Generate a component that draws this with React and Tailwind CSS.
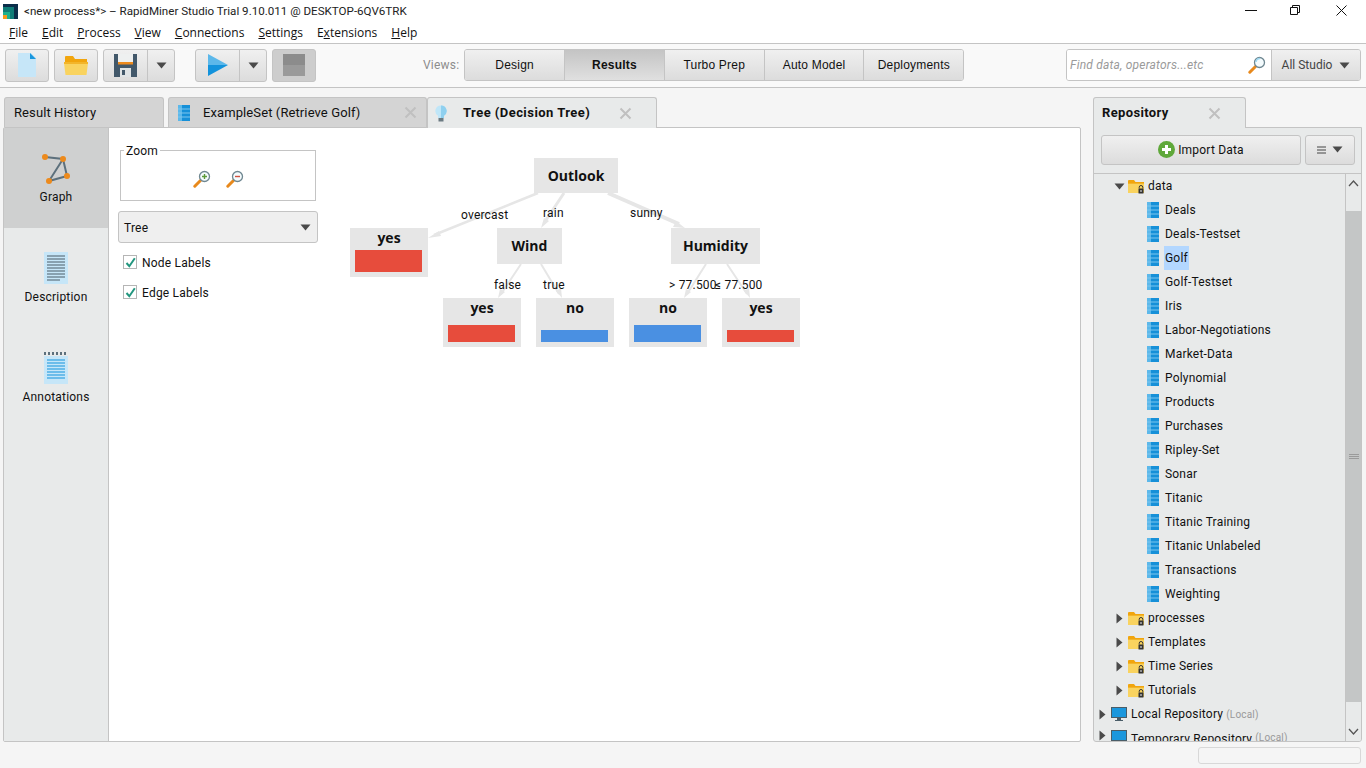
import React from "react";

const Caret = ({ className = "" }) => (
  <svg width="11" height="7" viewBox="0 0 11 7" className={className}><path d="M0.5 0.5h10L5.5 6.5z" fill="#4a4a4a" /></svg>
);

const DataIcon = () => (
  <svg width="12" height="16" viewBox="0 0 12 16" className="shrink-0">
    <rect width="12" height="16" fill="#1690d8" />
    <rect width="4" height="16" fill="#5cb8ea" />
    <path d="M0 4h12M0 8h12M0 12h12" stroke="#7cc6ee" strokeWidth="1" />
  </svg>
);

const Folder = ({ lock = true }) => (
  <svg width="17" height="15" viewBox="0 0 17 15" className="shrink-0">
    <path d="M0 2a1 1 0 0 1 1-1h5l1.5 2H16v3H0z" fill="#f1a50d" />
    <path d="M0 5h16v9H0z" fill="#f9d35f" />
    <path d="M0 4h16v1H0z" fill="#f3b52a" />
    {lock && (
      <g>
        <path d="M11.2 9.5V8.3a1.8 1.8 0 0 1 3.6 0v1.2" fill="none" stroke="#333" strokeWidth="1" />
        <rect x="10.5" y="9.5" width="5" height="5" rx="0.5" fill="#333" />
        <rect x="12.5" y="11" width="1" height="2" fill="#eee" />
      </g>
    )}
  </svg>
);

const Monitor = () => (
  <svg width="16" height="14" viewBox="0 0 16 14" className="shrink-0">
    <rect x="0" y="0" width="16" height="11" fill="#1b97dd" />
    <path d="M0 0h16v1H1v10H0z" fill="#4a5d68" />
    <path d="M16 0v11H0v-1h15V0z" fill="#4a5d68" />
    <path d="M6 11h4v2h2v1H4v-1h2z" fill="#4a5d68" />
  </svg>
);

const Close = ({ className = "" }) => (
  <svg width="13" height="13" viewBox="0 0 13 13" className={className}>
    <path d="M1.5 1.5l10 10M11.5 1.5l-10 10" stroke="#c0c0c0" strokeWidth="2" />
  </svg>
);

const Bulb = () => (
  <svg width="12" height="17" viewBox="0 0 12 17">
    <path d="M6 0.5a5.5 5.5 0 0 1 3 10.2V13H3v-2.3A5.5 5.5 0 0 1 6 0.5z" fill="#bfe6f8" />
    <path d="M6 0.5a5.5 5.5 0 0 1 3 10.2V13H6z" fill="#8fd0ef" />
    <rect x="3.5" y="13" width="5" height="3.5" fill="#6b7a82" />
  </svg>
);

const Magnifier = ({ sign, size = 18 }) => (
  <svg width={size} height={size} viewBox="0 0 18 18">
    <path d="M7.5 10.5L1.8 16.2" stroke="#e8891c" strokeWidth="3" strokeLinecap="round" />
    <circle cx="11.5" cy="6.5" r="5" fill="#f4fbfd" stroke="#6f8791" strokeWidth="1.3" />
    {sign === "plus" && <path d="M9 6.5h5M11.5 4v5" stroke="#5c9a3a" strokeWidth="1.4" />}
    {sign === "minus" && <path d="M9 6.5h5" stroke="#d1503f" strokeWidth="1.4" />}
    {sign === "none" && <path d="M8 6a4 4 0 0 1 4-3.5" stroke="#9fd8f0" strokeWidth="1.5" fill="none" />}
  </svg>
);

const Check = () => (
  <span className="w-[14px] h-[14px] border border-[#b5b5b5] bg-white flex items-center justify-center shrink-0">
    <svg width="11" height="11" viewBox="0 0 11 11"><path d="M1.5 6l2.8 3.2L9.8 1.2" fill="none" stroke="#23967f" strokeWidth="2" /></svg>
  </span>
);

const ToolBtn = ({ children, className = "" }) => (
  <div className={`h-[33px] flex items-center justify-center border border-[#c4c4c4] rounded-[3px] bg-gradient-to-b from-[#f0f0f0] to-[#dcdcdc] ${className}`}>{children}</div>
);

const menu = [
  ["F", "ile"], ["E", "dit"], ["P", "rocess"], ["V", "iew"], ["C", "onnections"], ["S", "ettings"], ["Ex", "tensions"], ["H", "elp"],
];

const views = [
  ["Design", false], ["Results", true], ["Turbo Prep", false], ["Auto Model", false], ["Deployments", false],
];

const files = ["Deals", "Deals-Testset", "Golf", "Golf-Testset", "Iris", "Labor-Negotiations", "Market-Data", "Polynomial", "Products", "Purchases", "Ripley-Set", "Sonar", "Titanic", "Titanic Training", "Titanic Unlabeled", "Transactions", "Weighting"];
const folders = ["processes", "Templates", "Time Series", "Tutorials"];

const RightCaret = () => (
  <svg width="7" height="11" viewBox="0 0 7 11" className="shrink-0"><path d="M0.5 0.5v10l6-5z" fill="#4a4a4a" /></svg>
);

const TreeNode = ({ x, y, w, h, label, bar, barTop }) => (
  <div className="absolute bg-[#e6e6e6]" style={{ left: x, top: y, width: w, height: h }}>
    {bar ? (
      <>
        <div className="text-center font-bold text-[14px] leading-[19px] text-[#111]" style={{ fontFamily: '"Open Sans", sans-serif' }}>{label}</div>
        <div className="absolute left-[5px] right-[6px] bottom-[5px]" style={{ height: barTop, background: bar }} />
      </>
    ) : (
      <div className="h-full flex items-center justify-center font-bold text-[14px] text-[#111] pb-[1px]" style={{ fontFamily: '"Open Sans", sans-serif' }}>{label}</div>
    )}
  </div>
);

const EdgeLabel = ({ x, y, children }) => (
  <span className="absolute text-[12px] leading-[14px] text-[#111] whitespace-nowrap tracking-[0.2px]" style={{ left: x, top: y }}>{children}</span>
);

const Graph = () => (
  <div className="relative flex-1">
    <svg className="absolute left-0 top-0" width="500" height="230" viewBox="0 0 500 230">
      <g fill="#e6e6e6">
        <path d="M98 110l11-7 2 5z" />
        <path d="M211 100l3-10 5 3z" />
        <path d="M355 100l-12-1 3-6z" />
        <path d="M168 170l2-9 5 3z" />
        <path d="M232 170l-6-7 5-3z" />
        <path d="M354 170l2-9 5 3z" />
        <path d="M420 170l-6-7 5-3z" />
      </g>
      <g fill="none" stroke="#e6e6e6">
        <path d="M208 65L104 107" strokeWidth="2.5" />
        <path d="M234 65L214 95" strokeWidth="3" />
        <path d="M278 65L349 96" strokeWidth="4" />
        <path d="M191 136L171 166" strokeWidth="2" />
        <path d="M211 136L229 166" strokeWidth="2" />
        <path d="M376 136L357 166" strokeWidth="2" />
        <path d="M397 136L417 166" strokeWidth="2" />
      </g>
    </svg>
    <TreeNode x={204} y={30} w={84} h={35} label="Outlook" />
    <TreeNode x={20} y={100} w={78} h={49} label="yes" bar="#e74c3c" barTop={22} />
    <TreeNode x={167} y={100} w={65} h={36} label="Wind" />
    <TreeNode x={341} y={100} w={89} h={36} label="Humidity" />
    <TreeNode x={113} y={170} w={78} h={49} label="yes" bar="#e74c3c" barTop={17} />
    <TreeNode x={206} y={170} w={78} h={49} label="no" bar="#4a90e2" barTop={12} />
    <TreeNode x={299} y={170} w={78} h={49} label="no" bar="#4a90e2" barTop={17} />
    <TreeNode x={392} y={170} w={78} h={49} label="yes" bar="#e74c3c" barTop={12} />
    <EdgeLabel x={131} y={80}>overcast</EdgeLabel>
    <EdgeLabel x={213} y={78}>rain</EdgeLabel>
    <EdgeLabel x={300} y={78}>sunny</EdgeLabel>
    <EdgeLabel x={164} y={150}>false</EdgeLabel>
    <EdgeLabel x={213} y={150}>true</EdgeLabel>
    <EdgeLabel x={339} y={150}>&gt; 77.500</EdgeLabel>
    <EdgeLabel x={385} y={150}>≤ 77.500</EdgeLabel>
  </div>
);

const SideItem = ({ active, label, children }) => (
  <div className={`h-[100px] flex flex-col items-center pt-[24px] ${active ? "bg-[#cfd0d0]" : ""}`}>
    <div className="h-[32px] flex items-center justify-center">{children}</div>
    <span className="text-[12px] leading-[14px] mt-[6px] text-[#111] tracking-[0.2px]">{label}</span>
  </div>
);

export default function App() {
  return (
    <div className="w-[1366px] h-[768px] overflow-hidden flex flex-col bg-[#f5f5f5] text-[12px] text-[#111]" style={{ fontFamily: 'Roboto, sans-serif' }}>
      {/* Title bar */}
      <div className="h-[21px] bg-white flex items-center shrink-0 relative">
        <svg width="15" height="15" viewBox="0 0 15 15" className="ml-[3px] mt-[1px]">
          <rect width="15" height="15" fill="#0b2e4a" />
          <rect y="3" width="11" height="12" fill="#0f7d78" />
          <rect y="8" width="7" height="7" fill="#1db08e" />
          <rect y="11" width="4" height="4" fill="#f59a1c" />
        </svg>
        <span className="ml-[6px] text-[11.6px] text-[#222] mt-[2px]">&lt;new process*&gt; – RapidMiner Studio Trial 9.10.011 @ DESKTOP-6QV6TRK</span>
        <div className="ml-auto flex items-center mr-[18px] mb-[1px]">
          <svg width="12" height="12" viewBox="0 0 12 12"><path d="M0 6.5h12" stroke="#111" /></svg>
          <svg width="12" height="12" viewBox="0 0 12 12" className="ml-[32px]"><path d="M1.5 3.5h7v7h-7zM3.5 3.5v-2h7v7h-2" fill="none" stroke="#111" /></svg>
          <svg width="13" height="13" viewBox="0 0 13 13" className="ml-[34px]"><path d="M1.5 1.5l10 10M11.5 1.5l-10 10" stroke="#111" /></svg>
        </div>
      </div>
      {/* Menu */}
      <div className="h-[23px] bg-white border-b border-[#c4c4c4] flex items-center pl-[9px] gap-[14px] pt-[2px] shrink-0 text-[12px]" style={{ fontFamily: '"Open Sans", sans-serif' }}>
        {menu.map(([u, r]) => (
          <span key={u} className="text-[#111]">
            {u === "Ex" ? <>E<span className="underline">x</span></> : <span className="underline">{u}</span>}{r}
          </span>
        ))}
      </div>
      {/* Toolbar */}
      <div className="h-[44px] bg-[#f9f9f9] border-b border-[#c4c4c4] flex items-center pl-[5px] pr-[5px] pb-[1px] shrink-0">
        <ToolBtn className="w-[44px]">
          <svg width="18" height="24" viewBox="0 0 18 24"><path d="M0 0h13l5 5v19H0z" fill="#c6e6f8" /><path d="M12 0l6 6h-6z" fill="#1b97dd" /></svg>
        </ToolBtn>
        <ToolBtn className="w-[44px] ml-[5px]">
          <svg width="24" height="20" viewBox="0 0 24 20"><path d="M1 2a1 1 0 0 1 1-1h7l2 3h12v4H1z" fill="#f1a50d" /><path d="M0 8h24l-1.5 12h-21z" fill="#f9d35f" /><path d="M0 7h24v2H0z" fill="#f3b52a" /></svg>
        </ToolBtn>
        <div className="ml-[5px] flex h-[33px] border border-[#c4c4c4] rounded-[3px] bg-gradient-to-b from-[#f0f0f0] to-[#dcdcdc]">
          <div className="w-[44px] flex items-center justify-center border-r border-[#c4c4c4]">
            <svg width="23" height="23" viewBox="0 0 23 23"><path d="M0 0h23v23H0z" fill="#42586a" /><rect x="4" y="0" width="15" height="9" fill="#eef0f0" /><rect x="4" y="8" width="15" height="2.5" fill="#ed8a1c" /><rect x="6" y="14" width="11" height="9" fill="#dfe3e5" /><rect x="8" y="16" width="3" height="5" fill="#42586a" /></svg>
          </div>
          <div className="w-[26px] flex items-center justify-center"><Caret /></div>
        </div>
        <div className="ml-[20px] flex h-[33px] border border-[#c4c4c4] rounded-[3px] bg-gradient-to-b from-[#f0f0f0] to-[#dcdcdc]">
          <div className="w-[44px] flex items-center justify-center border-r border-[#c4c4c4]">
            <svg width="20" height="22" viewBox="0 0 20 22"><path d="M0 0l20 11H0z" fill="#5cb8ea" /><path d="M0 11h20L0 22z" fill="#1393dc" /></svg>
          </div>
          <div className="w-[26px] flex items-center justify-center"><Caret /></div>
        </div>
        <div className="ml-[5px] w-[44px] h-[33px] rounded-[3px] bg-[#cdcdcd] border border-[#c4c4c4] flex items-center justify-center">
          <div className="w-[22px] h-[22px] bg-gradient-to-b from-[#8c8c8c] from-50% to-[#9a9a9a] to-50%" />
        </div>
        <span className="ml-[107px] text-[#8d8d8d] text-[12px] tracking-[0.2px]">Views:</span>
        <div className="ml-[5px] flex h-[32px] w-[500px] border border-[#c4c4c4] rounded-[3px] overflow-hidden tracking-[0.2px]" style={{ fontFamily: '"Liberation Sans", sans-serif' }}>
          {views.map(([v, a], i) => (
            <div key={v} className={`flex-1 flex items-center justify-center text-[12px] ${i ? "border-l border-[#c4c4c4]" : ""} ${a ? "font-bold bg-gradient-to-b from-[#c4c4c4] to-[#e0e0e0]" : "bg-gradient-to-b from-[#f0f0f0] to-[#dcdcdc]"}`}>{v}</div>
          ))}
        </div>
        <div className="ml-auto flex h-[32px] w-[295px] border border-[#c4c4c4] rounded-[3px] overflow-hidden">
          <div className="flex-1 bg-white flex items-center justify-between pl-[3px] pr-[5px] border-r border-[#c4c4c4]">
            <span className="italic text-[#9a9a9a] text-[12px] tracking-[0.2px]">Find data, operators...etc</span>
            <Magnifier sign="none" />
          </div>
          <div className="w-[88px] flex items-center justify-center gap-[7px] bg-gradient-to-b from-[#f0f0f0] to-[#dcdcdc] text-[#444]">All Studio <Caret /></div>
        </div>
      </div>
      {/* Main */}
      <div className="flex-1 flex pl-[3px] pr-[4px] pt-[9px] min-h-0 gap-[12px]">
        <div className="w-[1078px] flex flex-col">
          <div className="h-[30px] flex items-stretch pl-[1px] shrink-0 text-[13px] tracking-[0.1px]">
            <div className="w-[160px] bg-[#d4d4d4] border border-b-0 border-[#c4c4c4] rounded-t-[3px] flex items-center pl-[9px]">Result History</div>
            <div className="w-[259px] ml-[4px] bg-[#d4d4d4] border border-b-0 border-[#c4c4c4] rounded-t-[3px] flex items-center pl-[9px]">
              <DataIcon /><span className="ml-[13px]">ExampleSet (Retrieve Golf)</span>
              <Close className="ml-auto mr-[9px]" />
            </div>
            <div className="w-[230px] -mb-px z-10 bg-[#e8eaea] border border-b-0 border-[#c4c4c4] rounded-t-[3px] flex items-center pl-[7px]">
              <Bulb /><span className="ml-[16px] font-bold tracking-[0.45px]">Tree (Decision Tree)</span>
              <Close className="ml-[29px]" />
            </div>
          </div>
          <div className="h-[616px] bg-white border border-[#c4c4c4] rounded-[2px] flex">
            <div className="w-[105px] bg-[#e8eaea] border-r border-[#c4c4c4] shrink-0">
              <SideItem active label="Graph">
                <svg width="30" height="32" viewBox="0 0 30 32">
                  <path d="M4 5L22 7L26 24L8 29L22 7" fill="none" stroke="#5d707c" strokeWidth="2" />
                  <circle cx="4" cy="5" r="3" fill="#ed8a1c" /><circle cx="22" cy="7" r="3" fill="#ed8a1c" />
                  <circle cx="26" cy="24" r="3" fill="#ed8a1c" /><circle cx="8" cy="29" r="3" fill="#ed8a1c" />
                </svg>
              </SideItem>
              <SideItem label="Description">
                <svg width="24" height="32" viewBox="0 0 24 32"><rect width="24" height="32" fill="#c6e6f8" /><path d="M3 4h18M3 7h18M3 10h18M3 13h18M3 16h18M3 19h18M3 22h18M3 25h18M3 28h13" stroke="#4a5d68" strokeWidth="1" /></svg>
              </SideItem>
              <SideItem label="Annotations">
                <svg width="24" height="32" viewBox="0 0 24 32"><rect y="4" width="24" height="28" fill="#c6e6f8" /><path d="M1 0v3M5 0v3M9 0v3M13 0v3M17 0v3M21 0v3" stroke="#5d707c" strokeWidth="2" /><path d="M3 8h18M3 11h18M3 14h18M3 17h18M3 20h18M3 23h18M3 26h18" stroke="#1393dc" strokeWidth="1" /></svg>
              </SideItem>
            </div>
            <div className="w-[221px] shrink-0 pl-[9px] pt-[22px] flex flex-col tracking-[0.2px]">
              <div className="relative ml-[2px] w-[196px] h-[51px] border border-[#c4c4c4] flex items-center justify-center gap-[15px] pt-[6px]">
                <span className="absolute left-[3px] -top-[7px] bg-white px-[2px] leading-[15px] text-[12px]">Zoom</span>
                <Magnifier sign="plus" />
                <Magnifier sign="minus" />
              </div>
              <div className="mt-[10px] w-[200px] h-[32px] border border-[#c4c4c4] rounded-[3px] bg-[#efefef] flex items-center justify-between pl-[5px] pr-[6px]">
                <span className="pt-[2px]">Tree</span><Caret />
              </div>
              <div className="mt-[12px] ml-[5px] flex items-center gap-[5px] h-[14px]"><Check /><span className="pt-[2px]">Node Labels</span></div>
              <div className="mt-[16px] ml-[5px] flex items-center gap-[5px] h-[14px]"><Check /><span className="pt-[2px]">Edge Labels</span></div>
            </div>
            <Graph />
          </div>
        </div>
        <div className="flex-1 flex flex-col min-w-0">
          <div className="h-[30px] shrink-0 flex">
            <div className="w-[153px] -mb-px z-10 bg-[#e8eaea] border border-b-0 border-[#c4c4c4] rounded-t-[3px] flex items-center pl-[8px] font-bold text-[13px] tracking-[0.35px]">
              Repository<Close className="ml-[39px]" />
            </div>
          </div>
          <div className="h-[616px] border border-[#c4c4c4] rounded-b-[3px] bg-[#e8eaea] flex flex-col overflow-hidden tracking-[0.2px]">
            <div className="h-[46px] flex items-center pl-[7px] pr-[6px] pb-[2px] gap-[4px] border-b border-[#c4c4c4] shrink-0">
              <div className="w-[200px] h-[30px] border border-[#c4c4c4] rounded-[3px] bg-gradient-to-b from-[#f0f0f0] to-[#dcdcdc] flex items-center justify-center gap-[3px]">
                <svg width="17" height="17" viewBox="0 0 17 17"><circle cx="8.5" cy="8.5" r="8.5" fill="#5fa83a" /><path d="M8.5 4v9M4 8.5h9" stroke="#fff" strokeWidth="3" /></svg>
                Import Data
              </div>
              <div className="w-[50px] h-[30px] border border-[#c4c4c4] rounded-[3px] bg-gradient-to-b from-[#f0f0f0] to-[#dcdcdc] flex items-center justify-center gap-[6px]">
                <svg width="9" height="8" viewBox="0 0 9 8"><path d="M0 1h9M0 4h9M0 7h9" stroke="#444" /></svg>
                <Caret />
              </div>
            </div>
            <div className="flex-1 flex min-h-0">
              <div className="flex-1 overflow-hidden min-w-0">
                <div className="h-6 flex items-center pl-[20px]"><Caret /><span className="ml-[3px]"><Folder /></span><span className="ml-[3px]">data</span></div>
                {files.map((f) => (
                  <div key={f} className="h-6 flex items-center pl-[53px]">
                    <DataIcon />
                    <span className={`ml-[5px] h-6 flex items-center px-[1px] ${f === "Golf" ? "bg-[#b3d7ff]" : ""}`}>{f}</span>
                  </div>
                ))}
                {folders.map((f) => (
                  <div key={f} className="h-6 flex items-center pl-[22px]"><RightCaret /><span className="ml-[5px]"><Folder /></span><span className="ml-[3px]">{f}</span></div>
                ))}
                <div className="h-6 flex items-center pl-[5px]"><RightCaret /><span className="ml-[5px]"><Monitor /></span><span className="ml-[4px]">Local Repository</span><span className="ml-[3px] text-[10px] text-[#999]">(Local)</span></div>
                <div className="h-[21px] overflow-hidden flex items-start pl-[5px] pt-[4px]"><RightCaret /><span className="ml-[5px]"><Monitor /></span><span className="ml-[4px] whitespace-nowrap">Temporary Repository</span><span className="ml-[3px] text-[10px] text-[#999]">(Local)</span></div>
              </div>
              <div className="w-[16px] shrink-0 border-l border-[#c4c4c4] flex flex-col items-center bg-[#e8eaea]">
                <div className="h-[37px] shrink-0 w-full pt-[6px] flex justify-center">
                  <svg width="11" height="7" viewBox="0 0 11 7"><path d="M1 6l4.5-5L10 6" fill="none" stroke="#555" strokeWidth="1.3" /></svg>
                </div>
                <div className="h-[491px] w-full bg-[#c4c6c6] relative flex items-center justify-center">
                  <svg width="10" height="6" viewBox="0 0 10 6"><path d="M0 .5h10M0 2.5h10M0 4.5h10" stroke="#9a9a9a" /></svg>
                </div>
                <div className="flex-1 w-full flex items-end justify-center pb-[6px]">
                  <svg width="11" height="7" viewBox="0 0 11 7"><path d="M1 1l4.5 5L10 1" fill="none" stroke="#555" strokeWidth="1.3" /></svg>
                </div>
              </div>
            </div>
          </div>
        </div>
      </div>
      {/* Status */}
      <div className="h-[26px] flex justify-end items-start pt-[5px] pr-[5px] shrink-0">
        <div className="w-[163px] h-[17px] border border-[#d8d8d8] rounded-[3px] bg-[#f5f5f5]" />
      </div>
    </div>
  );
}
